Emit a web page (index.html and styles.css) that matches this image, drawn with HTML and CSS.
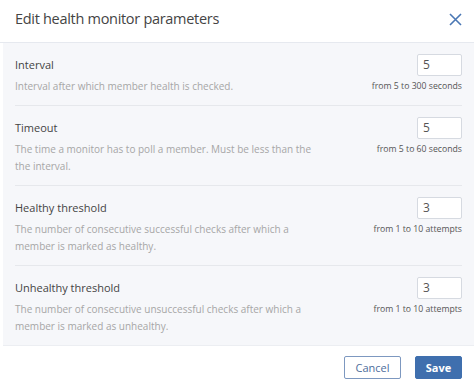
FILE: index.html
```html
<!DOCTYPE html>
<html>
<head>
<meta charset="utf-8">
<link rel="stylesheet" href="styles.css">
</head>
<body>
<div class="dialog">
  <div class="header">
    <h1 class="title">Edit health monitor parameters</h1>
    <button class="close" aria-label="Close">
      <svg width="13" height="13" viewBox="0 0 13 13"><path d="M1 1 L12 12 M12 1 L1 12" stroke="#4a77b4" stroke-width="1.6" fill="none"/></svg>
    </button>
  </div>
  <div class="body">
    <div class="row">
      <div class="info">
        <div class="label">Interval</div>
        <div class="desc">Interval after which member health is checked.</div>
      </div>
      <div class="field">
        <div class="input">5</div>
        <div class="hint">from 5 to 300 seconds</div>
      </div>
    </div>
    <div class="row">
      <div class="info">
        <div class="label">Timeout</div>
        <div class="desc">The time a monitor has to poll a member. Must be less than the the interval.</div>
      </div>
      <div class="field">
        <div class="input">5</div>
        <div class="hint">from 5 to 60 seconds</div>
      </div>
    </div>
    <div class="row">
      <div class="info">
        <div class="label">Healthy threshold</div>
        <div class="desc">The number of consecutive successful checks after which a member is marked as healthy.</div>
      </div>
      <div class="field">
        <div class="input">3</div>
        <div class="hint">from 1 to 10 attempts</div>
      </div>
    </div>
    <div class="row">
      <div class="info">
        <div class="label">Unhealthy threshold</div>
        <div class="desc">The number of consecutive unsuccessful checks after which a member is marked as unhealthy.</div>
      </div>
      <div class="field">
        <div class="input">3</div>
        <div class="hint">from 1 to 10 attempts</div>
      </div>
    </div>
  </div>
  <div class="footer">
    <button class="btn btn-cancel">Cancel</button>
    <button class="btn btn-save">Save</button>
  </div>
</div>
</body>
</html>
```
FILE: styles.css
```css
* { box-sizing: border-box; }
html, body { margin: 0; padding: 0; background: #fff; }
body { font-family: "Open Sans", "Noto Sans", sans-serif; width: 474px; height: 387px; overflow: hidden; }
.dialog { display: flex; flex-direction: column; }
.header {
  height: 43px;
  display: flex;
  align-items: center;
  justify-content: space-between;
  padding: 0 12px 0 15px;
  border-bottom: 1px solid #e6e9ef;
}
.title { margin: 0; font-size: 14.5px; letter-spacing: -0.3px; font-weight: 400; color: #444; line-height: 24px; padding-bottom: 4px; }
.close { border: 0; background: none; padding: 0; width: 13px; height: 13px; display: flex; margin-bottom: 4px; }
.body {
  margin-left: 3px;
  background: #f6f7fa;
  padding: 0 12px 0 12px;
  border-bottom: 1px solid #eceef2;
}
.row {
  display: grid;
  grid-template-columns: 1fr auto;
  column-gap: 20px;
  padding: 11px 0 10px;
  border-bottom: 1px solid #e6e8ec;
}
.row:last-child { border-bottom: 0; }
.info { max-width: 312px; }
.label { font-size: 11px; line-height: 22px; color: #444; }
.desc { margin-top: 2px; font-size: 10px; line-height: 17px; color: #a6a6a6; }
.field { display: flex; flex-direction: column; align-items: flex-end; }
.input {
  width: 45px; height: 22px;
  background: #fff;
  border: 1px solid #d6dae1;
  border-radius: 2px;
  font-size: 12px; line-height: 20px; color: #555;
  padding-left: 5px;
}
.hint { margin-top: 2px; font-size: 8.7px; line-height: 17px; color: #555; white-space: nowrap; }
.footer {
  height: 43px;
  display: flex;
  justify-content: flex-end;
  align-items: center;
  gap: 14px;
  padding: 0 12px 0 0;
}
.btn {
  height: 23px;
  border-radius: 2px;
  font-family: inherit;
  font-size: 11px;
  padding: 0;
}
.btn-cancel { width: 57px; background: #fff; border: 1px solid #7d98c0; color: #4d6d9c; }
.btn-save { width: 47px; background: #3f6fae; border: 1px solid #3f6fae; color: #fff; font-weight: 700; }
```
